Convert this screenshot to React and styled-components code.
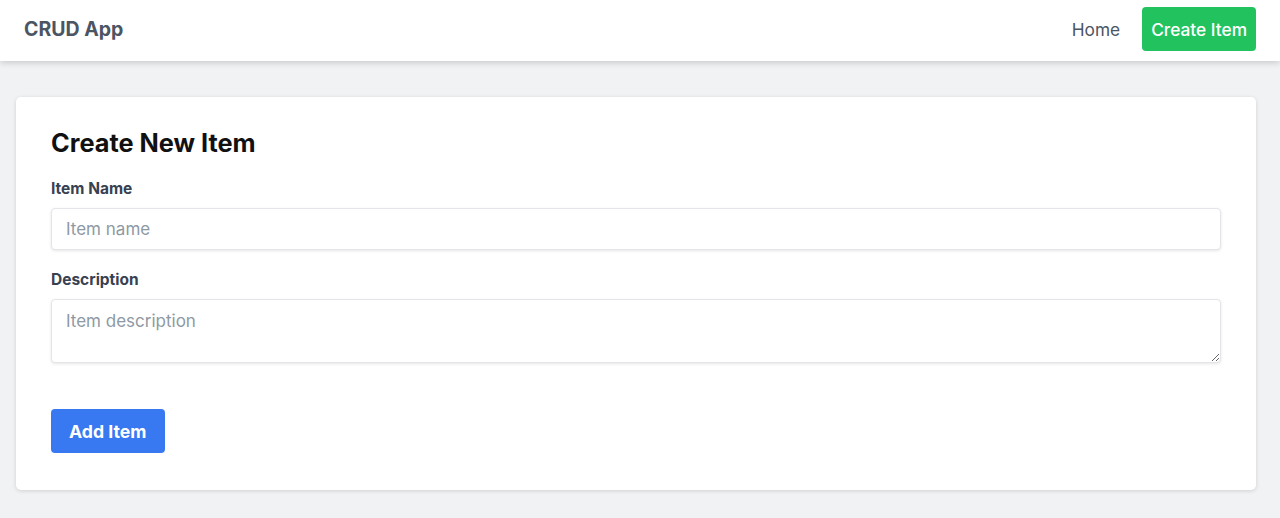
import styled, { createGlobalStyle } from "styled-components";

const GlobalStyle = createGlobalStyle`
  * { box-sizing: border-box; }
  body {
    margin: 0;
    background: #f1f2f4;
    font-family: Inter, "Liberation Sans", sans-serif;
  }
`;

const Header = styled.header`
  height: 61px;
  background: #fff;
  box-shadow: 0 2px 6px rgba(0, 0, 0, 0.16);
  display: flex;
  align-items: center;
  justify-content: space-between;
  padding: 0 24px 3px;
`;

const Brand = styled.div`
  font-size: 19.5px;
  font-weight: 700;
  color: #4b5563;
`;

const Nav = styled.nav`
  display: flex;
  align-items: center;
  gap: 22px;
`;

const NavLink = styled.a`
  font-size: 17.3px;
  color: #4b5563;
  text-decoration: none;
`;

const NavButton = styled.a`
  display: flex;
  align-items: center;
  height: 44px;
  padding: 0 9px;
  border-radius: 4px;
  background: #22c35e;
  color: #fff;
  font-size: 17.3px;
  font-weight: 500;
  text-decoration: none;
`;

const Main = styled.main`
  padding: 36px 24px 16px 16px;
`;

const Card = styled.section`
  background: #fff;
  border-radius: 5px;
  box-shadow: 0 1px 4px rgba(0, 0, 0, 0.14);
  padding: 30px 35px 37px;
`;

const Title = styled.h1`
  margin: 0 0 22px;
  font-size: 25.3px;
  font-weight: 700;
  color: #111;
`;

const Field = styled.div`
  margin-bottom: 21px;
`;

const Label = styled.label`
  display: block;
  margin-bottom: 11px;
  font-size: 15.5px;
  line-height: 17px;
  font-weight: 700;
  color: #374151;
`;

const Input = styled.input`
  display: block;
  width: 100%;
  height: 42px;
  padding: 0 14px;
  border: 1px solid #e3e5e8;
  border-radius: 4px;
  box-shadow: 0 1px 3px rgba(0, 0, 0, 0.1);
  font-family: inherit;
  font-size: 17px;
  color: #374151;
  &::placeholder { color: #8e99a4; }
`;

const TextArea = styled.textarea`
  display: block;
  width: 100%;
  height: 64px;
  padding: 11px 14px;
  border: 1px solid #e3e5e8;
  border-radius: 4px;
  box-shadow: 0 1px 3px rgba(0, 0, 0, 0.1);
  font-family: inherit;
  font-size: 17px;
  color: #374151;
  &::placeholder { color: #8e99a4; }
`;

const SubmitButton = styled.button`
  margin-top: 25px;
  height: 44px;
  padding: 0 18px;
  border: none;
  border-radius: 4px;
  background: #3878f0;
  color: #fff;
  font-family: inherit;
  font-size: 17.7px;
  font-weight: 700;
`;

export default function App() {
  return (
    <>
      <GlobalStyle />
      <Header>
        <Brand>CRUD App</Brand>
        <Nav>
          <NavLink href="#">Home</NavLink>
          <NavButton href="#">Create Item</NavButton>
        </Nav>
      </Header>
      <Main>
        <Card>
          <Title>Create New Item</Title>
          <Field>
            <Label>Item Name</Label>
            <Input placeholder="Item name" />
          </Field>
          <Field>
            <Label>Description</Label>
            <TextArea placeholder="Item description" />
          </Field>
          <SubmitButton>Add Item</SubmitButton>
        </Card>
      </Main>
    </>
  );
}
